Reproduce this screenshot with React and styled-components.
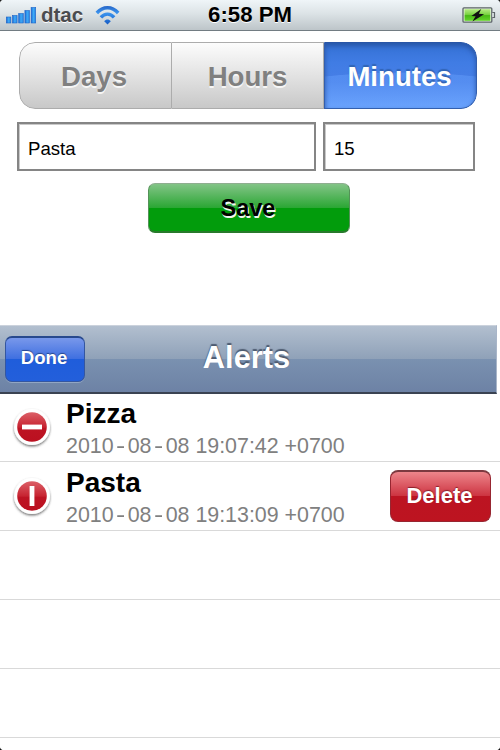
import React, { useState } from 'react';
import styled, { createGlobalStyle, css } from 'styled-components';

const GlobalStyle = createGlobalStyle`
  * {
    box-sizing: border-box;
  }

  body {
    margin: 0;
    background: #fff;
    font-family: "Liberation Sans", Arial, sans-serif;
  }

  button, input {
    font-family: inherit;
    margin: 0;
    border-radius: 0;
  }
`;

const Screen = styled.div`
  position: relative;
  display: flex;
  flex-direction: column;
  width: 500px;
  height: 750px;
  overflow: hidden;
  background: #fff;
`;

const Corner = styled.svg`
  position: absolute;
  width: 3px;
  height: 3px;
  ${({ $v }) => $v}: 0;
  ${({ $h }) => $h}: 0;
  transform: scale(${({ $h }) => ($h === 'right' ? -1 : 1)}, ${({ $v }) => ($v === 'bottom' ? -1 : 1)});
`;

const StatusBar = styled.header`
  display: grid;
  grid-template-columns: 1fr auto 1fr;
  align-items: center;
  height: 31px;
  flex: none;
  padding: 0 4px 0 6px;
  background: linear-gradient(#eff5f8, #dce3e6 45%, #bdc5c9);
  border-bottom: 1px solid #727c82;
`;

const Carrier = styled.div`
  display: flex;
  align-items: center;
  color: #4a4c4f;
  font-size: 20.5px;
  line-height: 30px;
  font-weight: bold;
  text-shadow: 0 1px 0 #fff;

  span {
    margin: 0 12px 0 5px;
  }
`;

const Clock = styled.div`
  padding-right: 2px;
  color: #000;
  font-size: 22.2px;
  line-height: 30px;
  font-weight: bold;
  text-shadow: 0 1px 0 #fff;
`;

const Battery = styled.svg`
  justify-self: end;
`;

const Form = styled.section`
  height: 294px;
  flex: none;
  padding: 11px 23px 0 17px;
`;

const Segments = styled.div`
  display: flex;
  width: 458px;
  height: 67px;
  margin-left: 2px;
  border-radius: 16px;
  overflow: hidden;
`;

const Segment = styled.button`
  width: 152px;
  padding: 2px 0 0;
  border: solid #acacac;
  border-width: 1px 1px 1px 0;
  background: linear-gradient(#fcfcfc, #e5e5e5 45%, #c8c8c8);
  color: #808080;
  font-size: 27.6px;
  font-weight: bold;
  text-shadow: 0 2px 0 #f6f6f6;

  &:first-child {
    width: 153px;
    padding-right: 3px;
    border-left-width: 1px;
    border-radius: 16px 0 0 16px;
  }

  &:last-child {
    width: 153px;
    padding-right: 2px;
    border-radius: 0 16px 16px 0;
  }

  ${({ $active }) => $active && css`
    border: 1px solid #335fae;
    border-top-color: #2855a6;
    background:
      radial-gradient(ellipse 110% 55% at 50% 100%, rgba(105, 163, 255, 0.4) 98%, transparent 100%),
      linear-gradient(#3470d4, #407ce4 30%, #477fe7 60%, #6aa2fc);
    box-shadow: inset 0 3px 5px #2856a7;
    color: #fff;
    text-shadow: 0 -2px 1px #3164b5;
  `}
`;

const Fields = styled.div`
  display: flex;
  gap: 7px;
  margin-top: 13px;
`;

const Field = styled.input`
  width: ${({ $width }) => $width}px;
  height: 49px;
  padding: 4px 0 0 9px;
  border: 2px solid #858585;
  background: #fff;
  box-shadow: inset 1px 1px 0 #c9c9c9;
  color: #000;
  font-size: 18.6px;
  outline: none;
`;

const GlossyButton = styled.button`
  display: flex;
  align-items: center;
  justify-content: center;
  padding: 0;
  font-weight: bold;
`;

const SaveButton = styled(GlossyButton)`
  width: 202px;
  height: 50px;
  margin: 12px 0 0 131px;
  padding: 2px 2px 0 0;
  border: 1px solid #549258;
  border-top-color: #8fae90;
  border-bottom: 2px solid #287a2c;
  border-radius: 7px;
  background: linear-gradient(#83c487, #2ca735 50%, #029c0c 50%, #029c0c);
  color: #000;
  font-size: 23.5px;
  text-shadow: 1px 2px 0 #f0f8f0;
`;

const DoneButton = styled(GlossyButton)`
  width: 80px;
  height: 46px;
  margin: 0 0 1px 5px;
  padding: 0 2px 2px 0;
  border: 1px solid #3456a0;
  border-top: 2px solid #28498d;
  border-radius: 7px;
  background: linear-gradient(#7998eb, #3d6ee0 50%, #1f5ddb 50%, #235fdb);
  box-shadow: 0 1px 0 #92a6c3;
  color: #fff;
  font-size: 18.6px;
  text-shadow: 0 -1px 1px #26468d;
`;

const DeleteButton = styled(GlossyButton)`
  width: 101px;
  height: 52px;
  margin: 0 9px 0 auto;
  padding: 0 2px 2px 0;
  border: 1px solid #972631;
  border-top: 2px solid #7c3940;
  border-radius: 8px;
  background: linear-gradient(#ed858b, #cd3542 48%, #bc1422 49%, #bd1420);
  color: #fff;
  font-size: 22px;
  text-shadow: 0 -1px 1px #8a202a;
`;

const ListHeader = styled.header`
  display: grid;
  grid-template-columns: 1fr auto 1fr;
  align-items: center;
  width: 497px;
  height: 69px;
  flex: none;
  border-top: 1px solid #cbd2dc;
  border-right: 1px solid #a9b5c8;
  border-bottom: 2px solid #3a4352;
  background: linear-gradient(#b2bfcf, #8fa1b8 50%, #7a91b0 50%, #6d82a5);
`;

const Title = styled.h1`
  margin: 0 0 3px;
  padding-right: 3px;
  color: #fff;
  font-size: 30.8px;
  line-height: 36px;
  font-weight: bold;
  text-shadow: 0 -2px 1px #4d5b70;
`;

const List = styled.ul`
  margin: 0;
  padding: 0;
  list-style: none;
`;

const Row = styled.li`
  display: flex;
  align-items: center;
  height: 69px;
  border-bottom: 1px solid #d9d9d9;

  &:first-child {
    height: 68px;
  }
`;

const RemoveToggle = styled.button`
  width: 44px;
  height: 44px;
  margin: 1px 12px 0 10px;
  padding: 0;
  border: 0;
  background: none;

  g {
    transform: rotate(${({ $open }) => ($open ? 90 : 0)}deg);
    transform-origin: 22px 21px;
  }
`;

const Details = styled.div`
  padding-top: 5px;
`;

const Name = styled.div`
  font-size: 28px;
  line-height: 32px;
  font-weight: bold;
`;

const When = styled.div`
  color: #808080;
  font-size: 21.4px;
  line-height: 32px;
  white-space: pre;
`;

const Dash = styled.span`
  display: inline-block;
  margin: 0 3.5px;
  transform: scaleX(1.3);
`;

const SignalIcon = () => (
  <svg width="30" height="17" viewBox="0 0 30 17">
    <defs>
      <linearGradient id="signal" x1="0" x2="1">
        <stop offset="0" stopColor="#1c65d3" />
        <stop offset="0.5" stopColor="#3eabf6" />
        <stop offset="1" stopColor="#2582e4" />
      </linearGradient>
    </defs>
    {[6, 7.5, 9.5, 12.5, 15.5].map((h, i) => (
      <rect key={h} x={0.3 + i * 6.2} y={16 - h} width="4.6" height={h} fill="url(#signal)" stroke="#1d64c8" strokeWidth="0.6" />
    ))}
  </svg>
);

const WifiIcon = () => (
  <svg width="26" height="20" viewBox="0 0 26 20">
    <defs>
      <linearGradient id="wifi" x1="0" x2="0" y1="0" y2="20" gradientUnits="userSpaceOnUse">
        <stop offset="0" stopColor="#225fc2" />
        <stop offset="0.4" stopColor="#3b94ee" />
        <stop offset="1" stopColor="#1459c2" />
      </linearGradient>
    </defs>
    <g fill="none" stroke="url(#wifi)" strokeWidth="3.4">
      <path d="M1.800 8C8 1 17 1 23.200 8" />
      <path d="M5.900 12.300c3.700-4.300 9.500-4.300 13.200 0" />
    </g>
    <path d="M9.200 16.200c1.800-2.300 4.800-2.300 6.600 0L12.500 19.600z" fill="url(#wifi)" />
  </svg>
);

const BatteryIcon = () => (
  <Battery width="34" height="18" viewBox="0 0 34 18">
    <defs>
      <linearGradient id="battery" x1="0" x2="0" y1="0" y2="1">
        <stop offset="0" stopColor="#b5ec83" />
        <stop offset="0.45" stopColor="#7cd344" />
        <stop offset="0.55" stopColor="#49b915" />
        <stop offset="1" stopColor="#65d52c" />
      </linearGradient>
    </defs>
    <rect x="1" y="1.800" width="28.800" height="14.400" rx="1" fill="#e7f3df" stroke="#5c6468" strokeWidth="1.300" />
    <rect x="2.500" y="3.200" width="25.800" height="11.600" fill="url(#battery)" />
    <path d="M30.300 6.500h2.200v5h-2.200" fill="#dce2e5" stroke="#5c6468" strokeWidth="1.200" />
    <path d="M19.200 3 9.400 9.900l4.200.3-3.200 5.300 11.700-7.300-5.200-.5z" fill="#111" />
  </Battery>
);

const NoEntryIcon = () => (
  <svg width="44" height="44" viewBox="0 0 44 44">
    <defs>
      <linearGradient id="badge" x1="0" x2="0" y1="0" y2="1">
        <stop offset="0" stopColor="#dc6068" />
        <stop offset="0.5" stopColor="#c72431" />
        <stop offset="0.55" stopColor="#bd1423" />
        <stop offset="1" stopColor="#bb1020" />
      </linearGradient>
      <filter id="drop" x="-20%" y="-20%" width="140%" height="150%">
        <feDropShadow dx="0" dy="1.500" stdDeviation="1.200" floodColor="#333" floodOpacity="0.65" />
      </filter>
    </defs>
    <circle cx="22" cy="21" r="18" fill="#fff" filter="url(#drop)" />
    <circle cx="22" cy="21" r="14.800" fill="url(#badge)" />
    <g>
      <rect x="12" y="18.600" width="20" height="4.800" fill="#fff" />
    </g>
  </svg>
);

const units = ['Days', 'Hours', 'Minutes'];

const alerts = [
  { name: 'Pizza', date: '2010-08-08', time: '19:07:42 +0700' },
  { name: 'Pasta', date: '2010-08-08', time: '19:13:09 +0700' },
];

const App = () => {
  const [unit, setUnit] = useState('Minutes');
  const [name, setName] = useState('Pasta');
  const [amount, setAmount] = useState('15');
  const [selected, setSelected] = useState('Pasta');

  return (
    <Screen>
      <GlobalStyle />

      <StatusBar>
        <Carrier>
          <SignalIcon />
          <span>dtac</span>
          <WifiIcon />
        </Carrier>
        <Clock>6:58 PM</Clock>
        <BatteryIcon />
      </StatusBar>

      <Form>
        <Segments>
          {units.map((label) => (
            <Segment key={label} $active={label === unit} onClick={() => setUnit(label)}>
              {label}
            </Segment>
          ))}
        </Segments>
        <Fields>
          <Field $width={299} value={name} onChange={(e) => setName(e.target.value)} />
          <Field $width={152} value={amount} onChange={(e) => setAmount(e.target.value)} />
        </Fields>
        <SaveButton>Save</SaveButton>
      </Form>

      <ListHeader>
        <DoneButton>Done</DoneButton>
        <Title>Alerts</Title>
      </ListHeader>

      <List>
        {alerts.map((alert) => (
          <Row key={alert.name}>
            <RemoveToggle $open={alert.name === selected} onClick={() => setSelected(alert.name)}>
              <NoEntryIcon />
            </RemoveToggle>
            <Details>
              <Name>{alert.name}</Name>
              <When>
                {alert.date.split('-').map((part, i) => (
                  <React.Fragment key={i}>
                    {i > 0 && <Dash>-</Dash>}
                    {part}
                  </React.Fragment>
                ))}
                {` ${alert.time}`}
              </When>
            </Details>
            {alert.name === selected && <DeleteButton>Delete</DeleteButton>}
          </Row>
        ))}
        <Row />
        <Row />
        <Row />
      </List>

      {['top', 'bottom'].map((v) => ['left', 'right'].map((h) => (
        <Corner key={v + h} $v={v} $h={h} viewBox="0 0 4 4">
          <path d="M0 0h3.200Q.600.600 0 3.200z" fill="#111" />
        </Corner>
      )))}
    </Screen>
  );
};

export default App;
